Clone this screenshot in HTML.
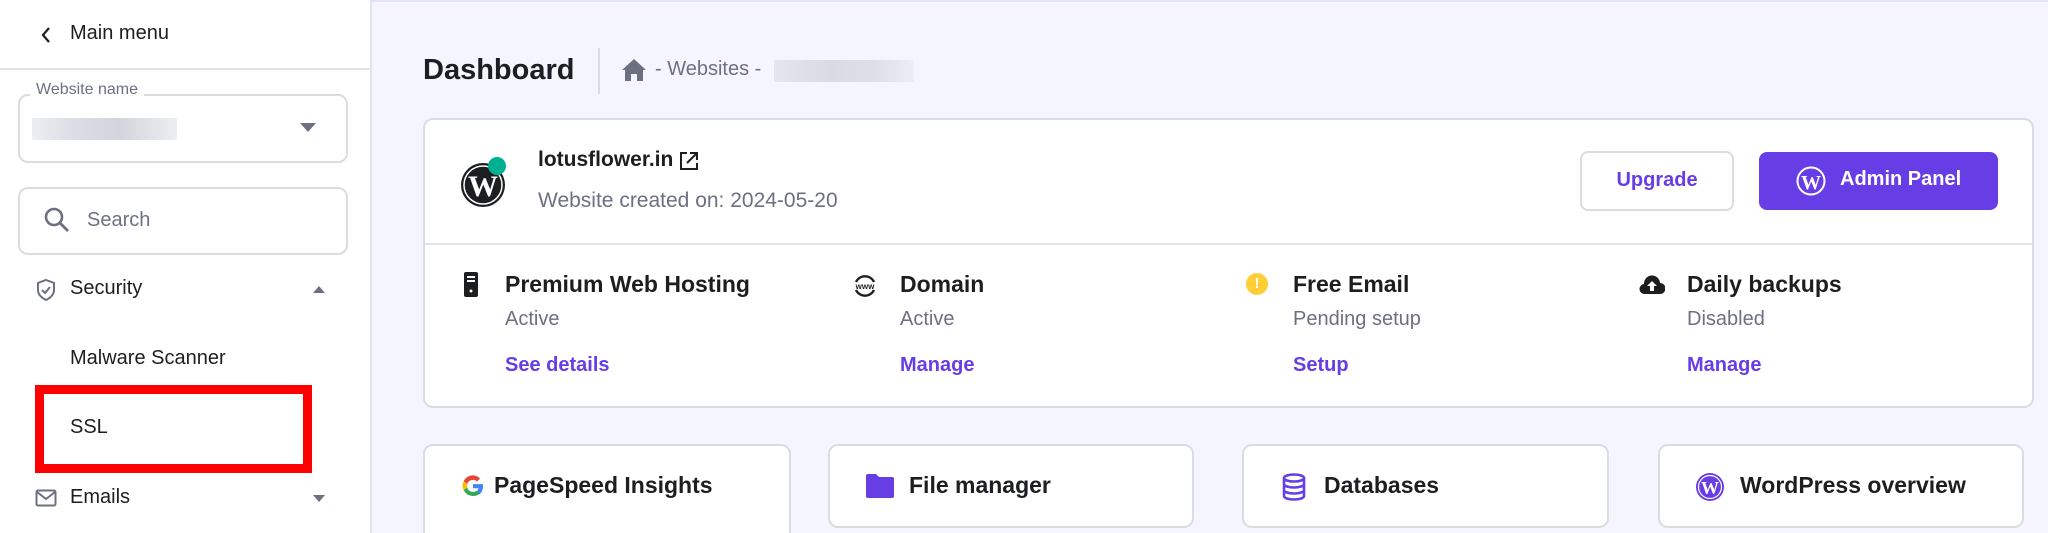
<!DOCTYPE html>
<html><head><meta charset="utf-8"><style>
*{box-sizing:border-box;margin:0;padding:0}
html,body{width:2048px;height:533px;overflow:hidden}
body{font-family:"Liberation Sans",sans-serif;background:#f4f5ff;position:relative;color:#1d1e20}
.abs{position:absolute}
.side{left:0;top:0;width:372px;height:533px;background:#fff;border-right:2px solid #e3e4ea}
.t{position:absolute;white-space:nowrap}
.card{position:absolute;background:#fff;border:2px solid #dadce0;border-radius:10px}
.h{font-size:23px;font-weight:700;color:#1d1e20}
.g{font-size:20px;color:#6d7081}
.l{font-size:20px;font-weight:700;color:#673de6}
</style></head><body>
<div class="abs" style="left:372px;top:0;width:1676px;height:2px;background:#dfe3fb"></div>
<div class="abs side">
  <svg class="abs" style="left:40px;top:26px" width="12" height="18" viewBox="0 0 12 18"><path d="M9 2L3 9l6 7" stroke="#1d1e20" stroke-width="2.2" fill="none"/></svg>
  <div class="t" style="left:70px;top:22px;font-size:20px">Main menu</div>
  <div class="abs" style="left:0;top:68px;width:372px;height:2px;background:#e3e4ea"></div>
  <div class="abs" style="left:18px;top:94px;width:330px;height:69px;border:2px solid #dadce0;border-radius:10px"></div>
  <div class="t" style="left:30px;top:81px;font-size:16px;color:#6d7081;background:#fff;padding:0 6px">Website name</div>
  <div class="abs" style="left:32px;top:118px;width:145px;height:22px;background:linear-gradient(90deg,#eceef2,#dcdde4 30%,#d4d5dc 60%,#eceef2)"></div>
  <svg class="abs" style="left:300px;top:123px" width="16" height="9"><path d="M0 0h16L8 9z" fill="#6d7081"/></svg>
  <div class="abs" style="left:18px;top:187px;width:330px;height:68px;border:2px solid #dadce0;border-radius:10px"></div>
  <svg class="abs" style="left:43px;top:206px" width="28" height="28" viewBox="0 0 28 28"><circle cx="11" cy="11" r="8" stroke="#6d7081" stroke-width="2.6" fill="none"/><path d="M17 17l8 8" stroke="#6d7081" stroke-width="2.8"/></svg>
  <div class="t" style="left:87px;top:209px;font-size:20px;color:#6d7081">Search</div>
  <svg class="abs" style="left:35px;top:278px" width="22" height="24" viewBox="0 0 22 24"><path d="M11 2l8 3v7c0 5-4 8-8 10-4-2-8-5-8-10V5z" stroke="#6d7081" stroke-width="2" fill="none"/><path d="M7 12l3 3 5-6" stroke="#6d7081" stroke-width="2" fill="none"/></svg>
  <div class="t" style="left:70px;top:277px;font-size:20px">Security</div>
  <svg class="abs" style="left:313px;top:286px" width="12" height="7"><path d="M0 7h12L6 0z" fill="#6d7081"/></svg>
  <div class="t" style="left:70px;top:347px;font-size:20px">Malware Scanner</div>
  <div class="abs" style="left:35px;top:385px;width:277px;height:88px;border:9px solid #ff0000"></div>
  <div class="t" style="left:70px;top:416px;font-size:20px">SSL</div>
  <svg class="abs" style="left:35px;top:489px" width="22" height="18" viewBox="0 0 22 18"><rect x="1.5" y="1.5" width="19" height="15" rx="1.5" stroke="#6d7081" stroke-width="2" fill="none"/><path d="M2 3l9 7 9-7" stroke="#6d7081" stroke-width="2" fill="none"/></svg>
  <div class="t" style="left:70px;top:486px;font-size:20px">Emails</div>
  <svg class="abs" style="left:313px;top:495px" width="12" height="7"><path d="M0 0h12L6 7z" fill="#6d7081"/></svg>
</div>

<div class="t" style="left:423px;top:54px;font-size:29px;font-weight:700">Dashboard</div>
<div class="abs" style="left:598px;top:48px;width:2px;height:46px;background:#dadce0"></div>
<svg class="abs" style="left:622px;top:59px" width="24" height="22" viewBox="0 0 24 22"><path d="M12 0L0 11h3v11h6v-7h6v7h6V11h3z" fill="#6d7081"/></svg>
<div class="t" style="left:655px;top:58px;font-size:20px;color:#6d7081">- Websites -</div>
<div class="abs" style="left:774px;top:60px;width:140px;height:22px;background:linear-gradient(90deg,#e4e6ef,#d8dae4 40%,#dcdee8 70%,#eceef6)"></div>

<div class="card" style="left:423px;top:118px;width:1611px;height:290px">
  <div class="abs" style="left:0;top:123px;width:1607px;height:2px;background:#e3e4ea"></div>
</div>
<svg class="abs" style="left:459px;top:161px" width="48" height="48" viewBox="0 0 48 48"><circle cx="24" cy="24" r="22" fill="#1d1e20"/><circle cx="24" cy="24" r="19" fill="none" stroke="#fff" stroke-width="1.5"/><text x="24" y="35" text-anchor="middle" font-family="Liberation Serif" font-weight="700" font-size="30" fill="#fff">W</text></svg>
<div class="abs" style="left:488px;top:157px;width:18px;height:18px;border-radius:50%;background:#00b090"></div>
<div class="t" style="left:538px;top:148px;font-size:21px;font-weight:700">lotusflower.in</div>
<svg class="abs" style="left:679px;top:151px" width="20" height="20" viewBox="0 0 20 20"><path d="M8 2H2v16h16v-6" stroke="#1d1e20" stroke-width="2" fill="none"/><path d="M11 2h7v7M18 2L8 12" stroke="#1d1e20" stroke-width="2" fill="none"/></svg>
<div class="t" style="left:538px;top:189px;font-size:21px;color:#6d7081">Website created on: 2024-05-20</div>

<div class="abs" style="left:1580px;top:151px;width:154px;height:60px;border:2px solid #dadce0;border-radius:8px;background:#fff"></div>
<div class="t" style="left:1580px;top:169px;width:154px;text-align:center;font-size:20px;font-weight:700;color:#673de6">Upgrade</div>
<div class="abs" style="left:1759px;top:152px;width:239px;height:58px;border-radius:8px;background:#673de6"></div>
<svg class="abs" style="left:1796px;top:166px" width="30" height="30" viewBox="0 0 30 30"><circle cx="15" cy="15" r="13.5" fill="none" stroke="#fff" stroke-width="2"/><text x="15" y="23" text-anchor="middle" font-family="Liberation Serif" font-weight="700" font-size="20" fill="#fff">W</text></svg>
<div class="t" style="left:1840px;top:168px;font-size:20px;font-weight:700;color:#fff">Admin Panel</div>

<svg class="abs" style="left:463px;top:272px" width="16" height="25" viewBox="0 0 16 25"><rect x="1" y="0" width="14" height="25" rx="2" fill="#1d1e20"/><rect x="4" y="4" width="8" height="2" fill="#fff"/><rect x="4" y="8" width="8" height="2" fill="#fff"/><circle cx="8" cy="19" r="1.5" fill="#fff"/></svg>
<div class="t h" style="left:505px;top:271px">Premium Web Hosting</div>
<div class="t g" style="left:505px;top:308px">Active</div>
<div class="t l" style="left:505px;top:354px">See details</div>

<svg class="abs" style="left:852px;top:273px" width="26" height="26" viewBox="0 0 26 26"><path d="M4 9a10 10 0 0118 0M4 17a10 10 0 0018 0" stroke="#1d1e20" stroke-width="2.4" fill="none"/><text x="13" y="16" text-anchor="middle" font-size="8" font-weight="700" fill="#1d1e20">www</text></svg>
<div class="t h" style="left:900px;top:271px">Domain</div>
<div class="t g" style="left:900px;top:308px">Active</div>
<div class="t l" style="left:900px;top:354px">Manage</div>

<div class="abs" style="left:1246px;top:273px;width:22px;height:22px;border-radius:50%;background:#ffcd35"></div>
<div class="t" style="left:1246px;top:275px;width:22px;text-align:center;font-size:15px;font-weight:700;color:#fff">!</div>
<div class="t h" style="left:1293px;top:271px">Free Email</div>
<div class="t g" style="left:1293px;top:308px">Pending setup</div>
<div class="t l" style="left:1293px;top:354px">Setup</div>

<svg class="abs" style="left:1639px;top:274px" width="26" height="22" viewBox="0 0 26 22"><path d="M6 20a5 5 0 01-1-10 8 8 0 0116-1 5.5 5.5 0 010 11z" fill="#1d1e20"/><path d="M13 7l-5 5h3v5h4v-5h3z" fill="#fff"/></svg>
<div class="t h" style="left:1687px;top:271px">Daily backups</div>
<div class="t g" style="left:1687px;top:308px">Disabled</div>
<div class="t l" style="left:1687px;top:354px">Manage</div>

<div class="card" style="left:423px;top:444px;width:368px;height:100px"></div>
<div class="card" style="left:828px;top:444px;width:366px;height:84px"></div>
<div class="card" style="left:1242px;top:444px;width:367px;height:84px"></div>
<div class="card" style="left:1658px;top:444px;width:366px;height:84px"></div>

<svg class="abs" style="left:461px;top:474px" width="24" height="24" viewBox="0 0 24 24"><path d="M22 12.3c0-.8-.1-1.5-.2-2.2H12v4.2h5.6a4.8 4.8 0 01-2.1 3.1v2.6h3.4c2-1.8 3.1-4.5 3.1-7.7z" fill="#4285f4"/><path d="M12 22c2.8 0 5.2-.9 6.9-2.5l-3.4-2.6c-.9.6-2.1 1-3.5 1-2.7 0-5-1.8-5.8-4.3H2.7v2.7A10 10 0 0012 22z" fill="#34a853"/><path d="M6.2 13.6a6 6 0 010-3.8V7.1H2.7a10 10 0 000 9.2z" fill="#fbbc05"/><path d="M12 5.9c1.5 0 2.9.5 4 1.6l3-3A10 10 0 002.7 7.1l3.5 2.7C7 7.7 9.3 5.9 12 5.9z" fill="#ea4335"/></svg>
<div class="t h" style="left:494px;top:472px">PageSpeed Insights</div>

<svg class="abs" style="left:866px;top:474px" width="28" height="24" viewBox="0 0 28 24"><path d="M0 2a2 2 0 012-2h8l3 3h13a2 2 0 012 2v17a2 2 0 01-2 2H2a2 2 0 01-2-2z" fill="#673de6"/></svg>
<div class="t h" style="left:909px;top:472px">File manager</div>

<svg class="abs" style="left:1281px;top:473px" width="26" height="28" viewBox="0 0 26 28"><ellipse cx="13" cy="5" rx="10" ry="3.5" stroke="#673de6" stroke-width="2.6" fill="none"/><path d="M3 5v18c0 2 4.5 3.5 10 3.5S23 25 23 23V5M3 11c0 2 4.5 3.5 10 3.5S23 13 23 11M3 17c0 2 4.5 3.5 10 3.5S23 19 23 17" stroke="#673de6" stroke-width="2.6" fill="none"/></svg>
<div class="t h" style="left:1324px;top:472px">Databases</div>

<svg class="abs" style="left:1695px;top:472px" width="30" height="30" viewBox="0 0 30 30"><circle cx="15" cy="15" r="14" fill="#673de6"/><circle cx="15" cy="15" r="11.5" fill="none" stroke="#fff" stroke-width="1.2"/><text x="15" y="22" text-anchor="middle" font-family="Liberation Serif" font-weight="700" font-size="18" fill="#fff">W</text></svg>
<div class="t h" style="left:1740px;top:472px">WordPress overview</div>
</body></html>
